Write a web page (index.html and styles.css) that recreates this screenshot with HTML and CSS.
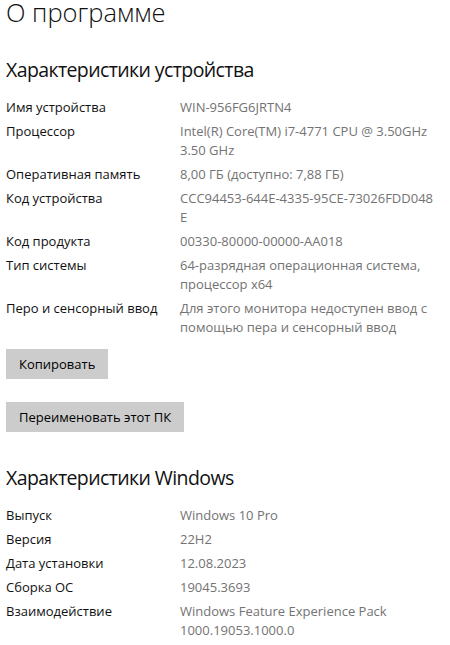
FILE: index.html
```html
<!DOCTYPE html>
<html lang="ru">
<head>
    <meta charset="UTF-8">
    <meta name="viewport" content="width=device-width, initial-scale=1.0">
    <title>О программе</title>
    <link rel="stylesheet" href="styles.css">
</head>
<body>
<div class="page">
    <h1 class="page-title">О программе</h1>

    <section class="section">
        <h2 class="section-title">Характеристики устройства</h2>
        <dl class="specs">
            <div class="spec-row">
                <dt>Имя устройства</dt>
                <dd>WIN-956FG6JRTN4</dd>
            </div>
            <div class="spec-row">
                <dt>Процессор</dt>
                <dd>Intel(R) Core(TM) i7-4771 CPU @ 3.50GHz 3.50 GHz</dd>
            </div>
            <div class="spec-row">
                <dt>Оперативная память</dt>
                <dd>8,00 ГБ (доступно: 7,88 ГБ)</dd>
            </div>
            <div class="spec-row">
                <dt>Код устройства</dt>
                <dd class="break">CCC94453-644E-4335-95CE-73026FDD048E</dd>
            </div>
            <div class="spec-row">
                <dt>Код продукта</dt>
                <dd>00330-80000-00000-AA018</dd>
            </div>
            <div class="spec-row">
                <dt>Тип системы</dt>
                <dd>64-разрядная операционная система, процессор x64</dd>
            </div>
            <div class="spec-row">
                <dt>Перо и сенсорный ввод</dt>
                <dd>Для этого монитора недоступен ввод с помощью пера и сенсорный ввод</dd>
            </div>
        </dl>
        <div class="actions">
            <button type="button" class="btn">Копировать</button>
            <button type="button" class="btn">Переименовать этот ПК</button>
        </div>
    </section>

    <section class="section">
        <h2 class="section-title">Характеристики Windows</h2>
        <dl class="specs">
            <div class="spec-row">
                <dt>Выпуск</dt>
                <dd>Windows 10 Pro</dd>
            </div>
            <div class="spec-row">
                <dt>Версия</dt>
                <dd>22H2</dd>
            </div>
            <div class="spec-row">
                <dt>Дата установки</dt>
                <dd>12.08.2023</dd>
            </div>
            <div class="spec-row">
                <dt>Сборка ОС</dt>
                <dd>19045.3693</dd>
            </div>
            <div class="spec-row">
                <dt>Взаимодействие</dt>
                <dd>Windows Feature Experience Pack 1000.19053.1000.0</dd>
            </div>
        </dl>
    </section>
</div>
</body>
</html>
```

FILE: styles.css
```css
body {
    margin: 0;
    background: #fff;
    color: #111;
    font-family: "Open Sans", "Noto Sans", sans-serif;
}
.page {
    padding: 0 6px;
}
.page-title {
    margin: 0;
    font-size: 25.5px;
    font-weight: 300;
    line-height: 24px;
}
.section-title {
    margin: 32px 0 14px;
    font-size: 19.5px;
    font-weight: 400;
    line-height: 28px;
    letter-spacing: -0.6px;
}
.specs {
    margin: 0;
    display: flex;
    flex-direction: column;
    gap: 5px;
}
.spec-row {
    display: grid;
    grid-template-columns: 174px 256px;
    font-size: 13px;
    line-height: 19px;
}
.spec-row dt {
    margin: 0;
}
.spec-row dd {
    margin: 0;
    color: #737373;
}
.break {
    word-break: break-all;
}
.actions {
    margin: 12px 0 12px;
    display: flex;
    flex-direction: column;
    align-items: flex-start;
    gap: 23px;
}
.btn {
    height: 30px;
    padding: 0 13px;
    border: none;
    background: #cccccc;
    color: #000;
    font-family: inherit;
    font-size: 13px;
}
```
